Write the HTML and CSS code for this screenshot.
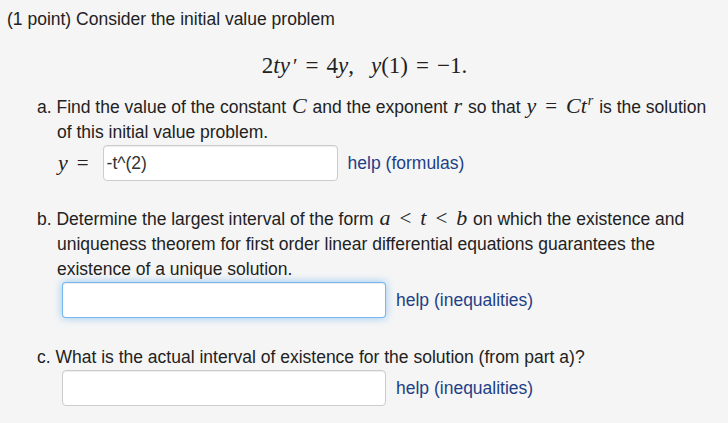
FILE: index.html
```html
<!DOCTYPE html>
<html>
<head>
  <meta charset="utf-8">
  <title>Problem</title>
  <link rel="stylesheet" href="styles.css">
</head>
<body>
  <div class="problem">
    <p class="intro">(1 point) Consider the initial value problem</p>
    <p class="display-eq">
      2<span class="m">ty</span><span class="prime">&prime;</span><span class="rel">=</span>4<span class="m">y</span>,<span class="qq"></span><span class="m">y</span>(1)<span class="rel">=</span>&minus;1.
    </p>

    <div class="part first">
      <p class="text">a. Find the value of the constant <span class="m big">C</span> and the exponent <span class="m big">r</span> so that <span class="m big">y</span><span class="rel sm">=</span><span class="m big">Ct<sup>r</sup></span> is the solution of this initial value problem.</p>
      <div class="answer-row">
        <span class="m big">y</span><span class="rel sm eq">=</span>
        <input class="ans short" type="text" value="-t^(2)">
        <a class="help" href="#">help (formulas)</a>
      </div>
    </div>

    <div class="part">
      <p class="text">b. Determine the largest interval of the form <span class="m big">a</span><span class="rel sm">&lt;</span><span class="m big">t</span><span class="rel sm">&lt;</span><span class="m big">b</span> on which the existence and uniqueness theorem for first order linear differential equations guarantees the existence of a unique solution.</p>
      <div class="answer-row pad">
        <input class="ans long focus" type="text" value="">
        <a class="help" href="#">help (inequalities)</a>
      </div>
    </div>

    <div class="part last">
      <p class="text">c. What is the actual interval of existence for the solution (from part a)?</p>
      <div class="answer-row pad">
        <input class="ans long" type="text" value="">
        <a class="help" href="#">help (inequalities)</a>
      </div>
    </div>
  </div>
</body>
</html>
```

FILE: styles.css
```css
html, body, p {
  margin: 0;
  padding: 0;
}

body {
  background-color: #f5f5f5;
  color: #222;
  font-family: 'Liberation Sans', Arial, sans-serif;
  font-size: 17.5px;
  line-height: 25px;
}

.problem {
  padding: 7px 0 0 7px;
}

.m {
  font-family: 'Liberation Serif', 'Times New Roman', serif;
  font-style: italic;
  line-height: 1;
}

.big {
  font-size: 22px;
  padding: 0 1px;
}

.rel {
  font-family: 'Liberation Serif', 'Times New Roman', serif;
  padding: 0 8px;
  line-height: 1;
}

.rel.sm {
  font-size: 21px;
  padding: 0 8px;
}

sup {
  font-size: 14px;
  line-height: 0;
  font-style: italic;
  padding-left: 1px;
}

.display-eq {
  margin-top: 21px;
  text-align: center;
  font-family: 'Liberation Serif', 'Times New Roman', serif;
  font-size: 23px;
  padding-right: 6px;
}

.prime {
  font-size: 21px;
  padding-left: 3px;
}

.qq {
  display: inline-block;
  width: 17px;
}

.part {
  margin-top: 26px;
  padding-left: 30px;
  width: 672px;
}

.part.first {
  margin-top: 16px;
}

.part.last {
  margin-top: 27px;
}

.text {
  padding-left: 20px;
  text-indent: -20px;
}

.answer-row {
  display: flex;
  align-items: center;
  margin-left: 20px;
}

.answer-row.pad {
  margin-left: 25px;
}

.eq {
  margin: 0 6px 0 0;
}

.ans {
  box-sizing: border-box;
  height: 36px;
  border: 1px solid #ccc;
  border-radius: 4px;
  background: #fff;
  font-family: 'Liberation Sans', Arial, sans-serif;
  font-size: 17.5px;
  color: #333;
  padding: 4px 3px;
  margin: 0 10px 0 0;
  box-shadow: inset 0 1px 1px rgba(0, 0, 0, 0.075);
}

.short {
  width: 235px;
}

.long {
  width: 324px;
}

.focus {
  border-color: rgba(82, 168, 236, 0.8);
  box-shadow: inset 0 1px 1px rgba(0, 0, 0, 0.075), 0 0 8px rgba(82, 168, 236, 0.6);
}

.help {
  color: #1f3f86;
  text-decoration: none;
}
```
